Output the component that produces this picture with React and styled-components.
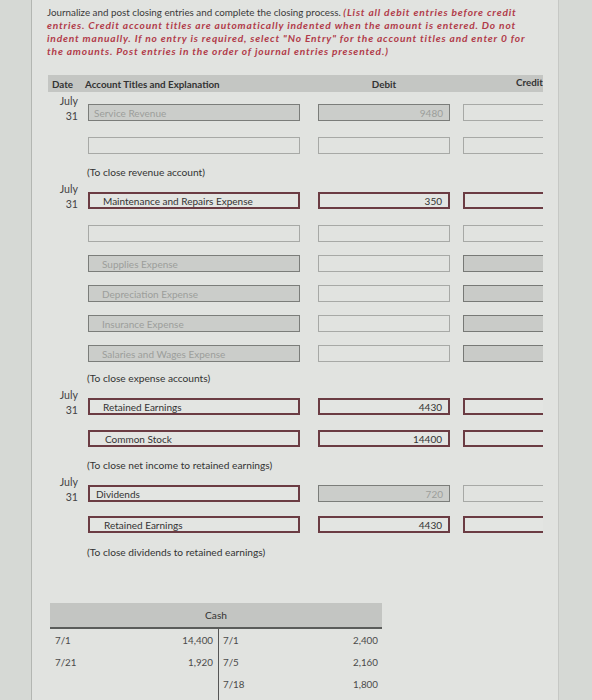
import React from "react";
import styled, { createGlobalStyle, css } from "styled-components";

const Global = createGlobalStyle`
  html, body { margin: 0; padding: 0; background: #d6d9d5; }
  body { font-family: Lato, "Open Sans", sans-serif; color: #333; }
`;

const Page = styled.div`
  width: 592px;
  height: 700px;
  overflow: hidden;
  display: flex;
`;

const Panel = styled.div`
  margin-left: 31px;
  width: 528px;
  height: 700px;
  background: #e1e3e0;
  border-left: 1px solid #b3b6b2;
  border-right: 1px solid #c6c8c5;
  box-sizing: border-box;
  padding: 6px 0 0 16px;
`;

const Instructions = styled.div`
  font-size: 9.8px;
  line-height: 13px;
  color: #3a3a3a;
  white-space: nowrap;
  margin-left: -1px;
`;

const Red = styled.span`
  color: #b13c4a;
  font-weight: 700;
  font-style: italic;
  font-size: 10.2px;
  letter-spacing: 0.82px;
`;

const Table = styled.div`
  margin-top: 17px;
  width: 495px;
  overflow: hidden;
`;

const HeaderBand = styled.div`
  display: grid;
  grid-template-columns: 40px 230px 132px 93px;
  height: 17px;
  align-items: center;
  background: #c4c6c3;
  font-size: 9.8px;
  font-weight: 700;
  color: #333;
`;

const HeadCell = styled.div`
  padding-left: ${(p) => p.$pl || 0}px;
  margin-left: ${(p) => p.$ml || 0}px;
  text-align: ${(p) => p.$align || "left"};
  align-self: ${(p) => p.$self || "center"};
  margin-top: ${(p) => p.$mt || 0}px;
`;

const Row = styled.div`
  display: grid;
  grid-template-columns: 40px 212px 18px 132px 13px 80px;
  margin-top: ${(p) => p.$mt}px;
  height: 17px;
`;

const DateCell = styled.div`
  grid-column: 1;
  margin-top: -10px;
  padding-right: 10px;
  text-align: right;
  font-size: 10.6px;
  line-height: 15px;
  color: #444;
`;

const kinds = {
  filled: css`
    background: #cbcdca;
    border: 1.5px solid #7b7d7a;
    color: #9c9e9b;
  `,
  light: css`
    background: transparent;
    border: 1px solid #a7a9a6;
    color: #444;
  `,
  red: css`
    background: #e3e5e2;
    border: 2px solid #6b3c43;
    color: #333;
  `,
  gray: css`
    background: #c9cbc8;
    border: 1.5px solid #777976;
    color: #444;
  `,
};

const Box = styled.div`
  grid-column: ${(p) => p.$col};
  box-sizing: border-box;
  height: 17px;
  display: flex;
  align-items: center;
  justify-content: ${(p) => (p.$num ? "flex-end" : "flex-start")};
  padding: 0 ${(p) => (p.$num ? 6 : 0)}px 0 ${(p) => p.$pad || 4}px;
  font-size: 10px;
  white-space: nowrap;
  ${(p) => kinds[p.$kind]}
  ${(p) => p.$open && css`border-right: none;`}
`;

const Note = styled.div`
  margin-top: ${(p) => p.$mt}px;
  margin-left: 39px;
  font-size: 10.2px;
  line-height: 12px;
  color: #333;
`;

const Cash = styled.div`
  margin-top: 45px;
  margin-left: 2px;
  width: 332px;
`;

const CashHead = styled.div`
  height: 24px;
  background: #c3c5c2;
  border-bottom: 2px solid #5a5c5a;
  display: flex;
  align-items: center;
  justify-content: center;
  font-size: 10.2px;
  color: #333;
`;

const CashBody = styled.div`
  display: grid;
  grid-template-columns: 168px 164px;
  height: 80px;
`;

const Side = styled.div`
  display: flex;
  flex-direction: column;
  ${(p) => p.$right && css`border-left: 1.5px solid #555;`}
`;

const CashLine = styled.div`
  height: 22px;
  display: flex;
  align-items: center;
  justify-content: space-between;
  padding: 0 ${(p) => (p.$right ? 4 : 5)}px;
  font-size: 9.8px;
  color: #4a4a4a;
`;

const entries = [
  { type: "line", mt: 12, date: true, acct: { v: "Service Revenue", k: "filled", pad: 5 }, debit: { v: "9480", k: "filled" }, credit: { k: "light" } },
  { type: "line", mt: 16, acct: { k: "light" }, debit: { k: "light" }, credit: { k: "light" } },
  { type: "note", mt: 12, text: "(To close revenue account)" },
  { type: "line", mt: 14, date: true, acct: { v: "Maintenance and Repairs Expense", k: "red", pad: 13 }, debit: { v: "350", k: "red" }, credit: { k: "red" } },
  { type: "line", mt: 16, acct: { k: "light" }, debit: { k: "light" }, credit: { k: "light" } },
  { type: "line", mt: 13, acct: { v: "Supplies Expense", k: "filled", pad: 13 }, debit: { k: "light" }, credit: { k: "gray" } },
  { type: "line", mt: 13, acct: { v: "Depreciation Expense", k: "filled", pad: 13 }, debit: { k: "light" }, credit: { k: "gray" } },
  { type: "line", mt: 13, acct: { v: "Insurance Expense", k: "filled", pad: 13 }, debit: { k: "light" }, credit: { k: "gray" } },
  { type: "line", mt: 13, acct: { v: "Salaries and Wages Expense", k: "filled", pad: 13 }, debit: { k: "light" }, credit: { k: "gray" } },
  { type: "note", mt: 10, text: "(To close expense accounts)" },
  { type: "line", mt: 14, date: true, acct: { v: "Retained Earnings", k: "red", pad: 13 }, debit: { v: "4430", k: "red" }, credit: { k: "red" } },
  { type: "line", mt: 15, acct: { v: "Common Stock", k: "red", pad: 15 }, debit: { v: "14400", k: "red" }, credit: { k: "red" } },
  { type: "note", mt: 12, text: "(To close net income to retained earnings)" },
  { type: "line", mt: 14, date: true, acct: { v: "Dividends", k: "red", pad: 6 }, debit: { v: "720", k: "filled" }, credit: { k: "light" } },
  { type: "line", mt: 14, acct: { v: "Retained Earnings", k: "red", pad: 14 }, debit: { v: "4430", k: "red" }, credit: { k: "red" } },
  { type: "note", mt: 13, text: "(To close dividends to retained earnings)" },
];

const cashLeft = [
  ["7/1", "14,400"],
  ["7/21", "1,920"],
];
const cashRight = [
  ["7/1", "2,400"],
  ["7/5", "2,160"],
  ["7/18", "1,800"],
];

export default function App() {
  return (
    <>
      <Global />
      <Page>
        <Panel>
          <Instructions>
            Journalize and post closing entries and complete the closing process.{" "}
            <Red>(List all debit entries before credit</Red>
            <br />
            <Red>entries. Credit account titles are automatically indented when the amount is entered. Do not</Red>
            <br />
            <Red>indent manually. If no entry is required, select "No Entry" for the account titles and enter 0 for</Red>
            <br />
            <Red>the amounts. Post entries in the order of journal entries presented.)</Red>
          </Instructions>
          <Table>
            <HeaderBand>
              <HeadCell $pl={4}>Date</HeadCell>
              <HeadCell $ml={-3}>Account Titles and Explanation</HeadCell>
              <HeadCell $align="center">Debit</HeadCell>
              <HeadCell $align="right" $self="start" $mt={1}>Credit</HeadCell>
            </HeaderBand>
            {entries.map((e, i) =>
              e.type === "note" ? (
                <Note key={i} $mt={e.mt}>{e.text}</Note>
              ) : (
                <Row key={i} $mt={e.mt}>
                  {e.date ? (
                    <DateCell>
                      July
                      <br />
                      31
                    </DateCell>
                  ) : null}
                  <Box $col={2} $kind={e.acct.k} $pad={e.acct.pad}>{e.acct.v}</Box>
                  <Box $col={4} $kind={e.debit.k} $num>{e.debit.v}</Box>
                  <Box $col={6} $kind={e.credit.k} $open $num />
                </Row>
              )
            )}
          </Table>
          <Cash>
            <CashHead>Cash</CashHead>
            <CashBody>
              <Side>
                {cashLeft.map(([d, a]) => (
                  <CashLine key={d}>
                    <span>{d}</span>
                    <span>{a}</span>
                  </CashLine>
                ))}
              </Side>
              <Side $right>
                {cashRight.map(([d, a]) => (
                  <CashLine key={d} $right>
                    <span>{d}</span>
                    <span>{a}</span>
                  </CashLine>
                ))}
              </Side>
            </CashBody>
          </Cash>
        </Panel>
      </Page>
    </>
  );
}
